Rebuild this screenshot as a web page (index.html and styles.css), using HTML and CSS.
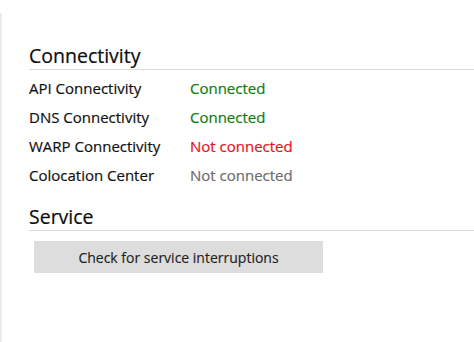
FILE: index.html
```html
<!DOCTYPE html>
<html>
<head>
<meta charset="utf-8">
<link rel="stylesheet" href="styles.css">
</head>
<body>
<div class="panel">
  <section class="section">
    <h2 class="heading">Connectivity</h2>
    <div class="rows">
      <div class="row"><span class="label">API Connectivity</span><span class="value ok">Connected</span></div>
      <div class="row"><span class="label">DNS Connectivity</span><span class="value ok">Connected</span></div>
      <div class="row"><span class="label">WARP Connectivity</span><span class="value bad">Not connected</span></div>
      <div class="row"><span class="label">Colocation Center</span><span class="value off">Not connected</span></div>
    </div>
  </section>
  <section class="section">
    <h2 class="heading">Service</h2>
    <button class="btn">Check for service interruptions</button>
  </section>
</div>
</body>
</html>
```

FILE: styles.css
```css
html, body {
  margin: 0;
  padding: 0;
  background: #ffffff;
  height: 100%;
}
body {
  font-family: "Open Sans", "Noto Sans", sans-serif;
  color: #111;
  padding-top: 13px;
  box-sizing: border-box;
}
.panel {
  border-left: 2px solid #ececec;
  height: 100%;
  padding: 30px 0 0 27px;
  box-sizing: border-box;
}
.section {
  display: flex;
  flex-direction: column;
}
.heading {
  margin: 0;
  font-size: 19.5px;
  font-weight: 400;
  line-height: 26px;
  border-bottom: 1px solid #d9d9d9;
  padding-bottom: 0;
  color: #0d0d0d;
  -webkit-text-stroke: 0.2px #0d0d0d;
}
.rows {
  display: flex;
  flex-direction: column;
  padding-top: 3px;
  margin-bottom: 15px;
}
.row {
  display: flex;
  height: 29px;
  align-items: center;
  font-size: 15px;
  -webkit-text-stroke: 0.2px currentColor;
}
.label {
  width: 161px;
  color: #111;
}
.value.ok { color: #107c10; }
.value.bad { color: #e81123; }
.value.off { color: #6d6d6d; }
.btn {
  align-self: flex-start;
  margin: 10px 0 0 5px;
  width: 289px;
  height: 32px;
  border: none;
  background: #dddddd;
  font-family: inherit;
  font-size: 14px;
  color: #222;
  padding: 0;
  -webkit-text-stroke: 0.15px #222;
}
```
